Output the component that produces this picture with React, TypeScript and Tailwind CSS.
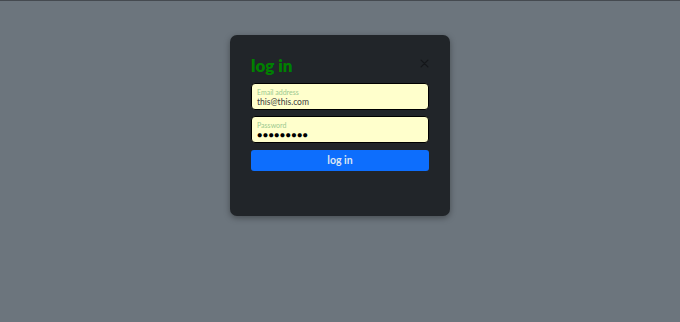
import React from "react";

export default function App() {
  return (
    <div
      className="w-[680px] h-[322px] bg-[#6c757d] border-t border-[#454a50] overflow-hidden"
      style={{ fontFamily: "Lato, 'Noto Sans', sans-serif" }}
    >
      <div className="w-[220px] h-[181px] mx-auto mt-[34px] bg-[#212529] rounded-[7px] shadow-[0_2px_6px_rgba(0,0,0,0.35)] px-[21px] pt-[19px] flex flex-col">
        <div className="flex items-center justify-between h-[22px]">
          <span className="text-[#008000] font-extrabold text-[17px] leading-none">log in</span>
          <svg width="9" height="9" viewBox="0 0 16 16" className="-mt-[3px]">
            <path d="M2 2L14 14M14 2L2 14" stroke="#111315" strokeWidth="2.4" strokeLinecap="round" opacity="0.75" />
          </svg>
        </div>
        <div className="mt-[7px] h-[27px] rounded-[4px] border border-black bg-[#ffffcc] px-[5px] pt-[4px] flex flex-col">
          <span className="text-[7px] leading-[8px] text-[#9bc98f]">Email address</span>
          <span className="text-[8.5px] leading-[12px] text-[#3d3d3d]">this@this.com</span>
        </div>
        <div className="mt-[6px] h-[27px] rounded-[4px] border border-black bg-[#ffffcc] px-[5px] pt-[4px] flex flex-col">
          <span className="text-[7px] leading-[8px] text-[#9bc98f]">Password</span>
          <span className="text-[8.5px] leading-[12px] text-black tracking-[0.6px]">●●●●●●●●●</span>
        </div>
        <button className="mt-[7px] h-[21px] rounded-[3px] bg-[#0d6efd] text-[#dde6f3] text-[10.5px] font-bold flex items-center justify-center">
          log in
        </button>
      </div>
    </div>
  );
}
